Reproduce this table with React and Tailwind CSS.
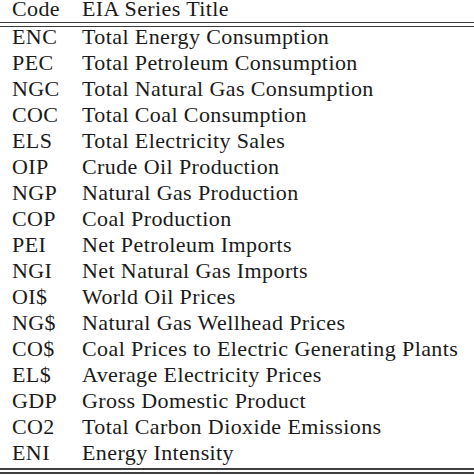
const rows = [
  ['ENC', 'Total Energy Consumption'],
  ['PEC', 'Total Petroleum Consumption'],
  ['NGC', 'Total Natural Gas Consumption'],
  ['COC', 'Total Coal Consumption'],
  ['ELS', 'Total Electricity Sales'],
  ['OIP', 'Crude Oil Production'],
  ['NGP', 'Natural Gas Production'],
  ['COP', 'Coal Production'],
  ['PEI', 'Net Petroleum Imports'],
  ['NGI', 'Net Natural Gas Imports'],
  ['OI$', 'World Oil Prices'],
  ['NG$', 'Natural Gas Wellhead Prices'],
  ['CO$', 'Coal Prices to Electric Generating Plants'],
  ['EL$', 'Average Electricity Prices'],
  ['GDP', 'Gross Domestic Product'],
  ['CO2', 'Total Carbon Dioxide Emissions'],
  ['ENI', 'Energy Intensity'],
];

const App = () => {
  return (
    <div className="w-[474px] h-[475px] bg-white text-[#1a1a1a] text-[22px] leading-[18px] tracking-[0.4px] font-[family-name:'Liberation_Serif',serif] overflow-hidden">
      {/* header */}
      <div className="flex h-[22px] pl-[12px]">
        <div className="w-[70px] whitespace-nowrap">Code</div>
        <div className="whitespace-nowrap">EIA Series Title</div>
      </div>
      <div className="h-px bg-[#3a3a3a]" />
      <div className="h-[3px]" />
      <div className="h-px bg-[#3a3a3a]" />
      <div className="h-px" />

      {/* body */}
      {rows.map(([code, title], i) => (
        <div key={code} className={`flex pl-[12px] ${i === rows.length - 1 ? 'h-[24px]' : 'h-[26px]'}`}>
          <div className="w-[70px] whitespace-nowrap">{code}</div>
          <div className="whitespace-nowrap">{title}</div>
        </div>
      ))}

      <div className="h-[2px] bg-[#404040]" />
      <div className="h-[2px]" />
      <div className="h-[2px] bg-[#404040]" />
    </div>
  );
};

export default App;
